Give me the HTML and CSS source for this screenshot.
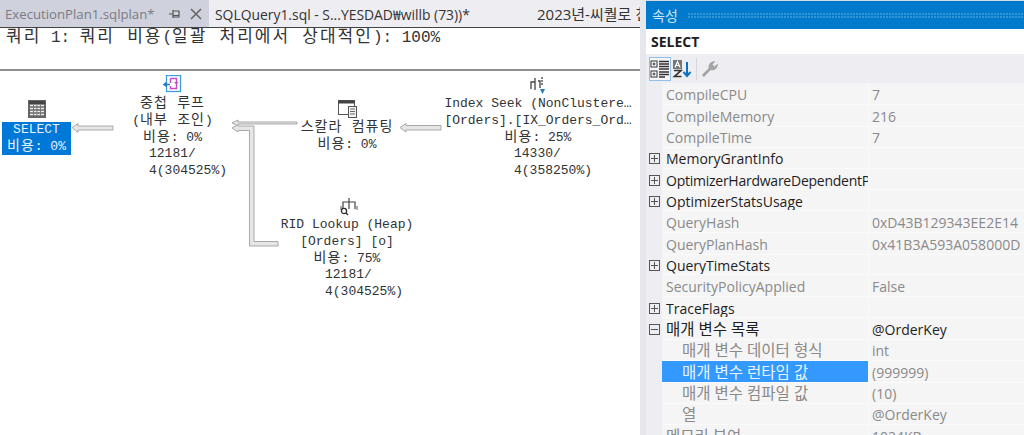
FILE: index.html
```html
<!DOCTYPE html>
<html lang="ko">
<head>
<meta charset="utf-8">
<title>속성</title>
<link rel="stylesheet" href="styles.css">
</head>
<body>
<div class="app">
  <section class="editor">
    <div class="tabs">
      <div class="tab tab-active">
        <span class="tab-name">ExecutionPlan1.sqlplan*</span>
        <svg class="pin" width="14" height="12" viewBox="0 0 14 12"><path d="M1 6H5M5 2V10M5 3H11V9H5M5 7.5H11" fill="none" stroke="#555" stroke-width="1.2"/></svg>
        <svg class="close" width="12" height="12" viewBox="0 0 12 12"><path d="M1 1L11 11M11 1L1 11" stroke="#666" stroke-width="1.6"/></svg>
      </div>
      <div class="tab tab-second">SQLQuery1.sql - S...YESDAD₩willb (73))*</div>
      <div class="tab tab-third">2023년-씨퀄로 친</div>
    </div>
    <div class="query-head"><span class="ko">쿼리</span> 1: <span class="ko">쿼리 비용</span>(<span class="ko">일괄 처리에서 상대적인</span>): 100%</div>
    <div class="plan">
      <svg class="links" width="640" height="364" viewBox="0 0 640 364">
        <path class="link" d="M72 56.500L78 52.500V55H113V59H78V61.500Z"/>
        <path class="link" d="M232 52L238 49V51H297V53H238V55Z"/>
        <path class="link" d="M232 57L238 53.500V55H254V170.500H278V175H249.500V59.500H238V61Z"/>
        <path class="link" d="M400 56.500L406 52.500V54.500H441V59H406V61Z"/>
      </svg>

      <svg class="icon icon-select" width="20" height="20" viewBox="0 0 20 20">
        <rect x="1" y="1" width="18" height="18" fill="#666"/>
        <rect x="2" y="2" width="16" height="3" fill="#444"/>
        <path d="M3 6.500H17M3 9.500H17M3 12.500H17M3 15.500H17" stroke="#eee" stroke-width="1.500"/>
        <path d="M6.500 6V17M10 6V17M13.500 6V17" stroke="#777"/>
      </svg>
      <svg class="icon icon-loop" width="19" height="19" viewBox="0 0 19 19">
        <rect x="3.500" y="0.500" width="14" height="16" fill="#fff" stroke="#3f9be0" stroke-width="1.300"/>
        <path d="M7.500 3.500H13.500V13.500H7.500V11M7.500 3.500V8" fill="none" stroke="#c050c0" stroke-width="1.500"/>
        <path d="M11 7H15.500L13.300 9.500Z" fill="#c050c0"/>
        <path d="M1 9.500H7M3.500 7.500L1 9.500L3.500 11.500" fill="none" stroke="#1f7ac4" stroke-width="1.500"/>
      </svg>
      <svg class="icon icon-scalar" width="20" height="20" viewBox="0 0 20 20">
        <rect x="0.500" y="1.500" width="16" height="14" fill="#fff" stroke="#555"/>
        <rect x="0.500" y="1.500" width="16" height="3" fill="#444"/>
        <rect x="10.500" y="7.500" width="8" height="11" fill="#f4f4f4" stroke="#555"/>
        <path d="M12 10H17M12 12.500H17M12 15H17" stroke="#666"/>
      </svg>
      <svg class="icon icon-seek" width="16" height="20" viewBox="0 0 16 20">
        <path d="M1 13V6H5M5 2V14M8 5H10V12" fill="none" stroke="#444" stroke-width="1.300"/>
        <path d="M12 1V9" stroke="#444" stroke-width="1.300" stroke-dasharray="2 1"/>
        <path d="M10 13H15L12.500 18Z" fill="#1f7ac4"/>
      </svg>
      <svg class="icon icon-rid" width="20" height="20" viewBox="0 0 20 20">
        <path d="M10 1V12M4 12V5H16V12" fill="none" stroke="#444" stroke-width="1.200"/>
        <path d="M2 9V13M18 9V13" stroke="#777" stroke-width="1.200"/>
        <circle cx="5" cy="14" r="2.600" fill="#fff" stroke="#333" stroke-width="1.300"/>
        <path d="M7 16L9 18" stroke="#333" stroke-width="1.500"/>
      </svg>

      <div class="node node-select selected">SELECT<br><span class="ko">비용</span>: 0%</div>
      <div class="node node-loop"><span class="ko">중첩 루프</span><br>(<span class="ko">내부 조인</span>)<br><span class="ko">비용</span>: 0%<br><span class="count">12181/<br>4(304525%)</span></div>
      <div class="node node-scalar"><span class="ko">스칼라 컴퓨팅</span><br><span class="ko">비용</span>: 0%</div>
      <div class="node node-seek">Index Seek (NonClustere…<br>[Orders].[IX_Orders_Ord…<br><span class="ko">비용</span>: 25%<br><span class="count">14330/<br>4(358250%)</span></div>
      <div class="node node-rid">RID Lookup (Heap)<br>[Orders] [o]<br><span class="ko">비용</span>: 75%<br><span class="count">12181/<br>4(304525%)</span></div>
    </div>
  </section>

  <aside class="props">
    <header class="props-title"><span class="props-title-text">속성</span><span class="grip"></span></header>
    <div class="props-object">SELECT</div>
    <div class="toolbar">
      <button class="tool tool-on" type="button" aria-label="범주별">
        <svg width="20" height="20" viewBox="0 0 20 20">
          <rect x="1" y="2" width="6" height="6" fill="#fff" stroke="#333"/><path d="M2.500 5H5.500M4 3.500V6.500" stroke="#333"/>
          <rect x="1" y="12" width="6" height="6" fill="#fff" stroke="#333"/><path d="M2.500 15H5.500M4 13.500V16.500" stroke="#333"/>
          <path d="M9 2.500H19M9 5H19M9 7.500H19M9 10H19M9 13H19M9 15.500H19M9 18H15" stroke="#333" stroke-width="1.300"/>
        </svg>
      </button>
      <button class="tool" type="button" aria-label="사전순">
        <svg width="20" height="20" viewBox="0 0 20 20">
          <rect x="1" y="1" width="9" height="9" fill="#777"/>
          <path d="M3 8.500L5.500 2.500L8 8.500M4 6.500H7" fill="none" stroke="#fff" stroke-width="1.200"/>
          <path d="M2 11.500H9L2.500 17.500H9.500" fill="none" stroke="#333" stroke-width="1.700"/>
          <path d="M15 3V17M11.500 13L15 17L18.500 13" fill="none" stroke="#0e70c0" stroke-width="2"/>
        </svg>
      </button>
      <span class="tool-sep"></span>
      <button class="tool tool-wrench" type="button" aria-label="속성 페이지">
        <svg width="20" height="20" viewBox="0 0 20 20">
          <path d="M1 16.800L8.500 9.300C7.500 4.500 11.500 0.500 16 1.500L12.800 5L15 7.200L18.500 3.800C19.500 8.500 15 12.500 10.800 11L3.300 19Z" fill="#a4a4a4"/>
        </svg>
      </button>
    </div>
    <div class="grid">
      <div class="row"><span class="gut"></span><span class="key dim">CompileCPU</span><span class="val dim">7</span></div>
      <div class="row"><span class="gut"></span><span class="key dim">CompileMemory</span><span class="val dim">216</span></div>
      <div class="row"><span class="gut"></span><span class="key dim">CompileTime</span><span class="val dim">7</span></div>
      <div class="row"><span class="gut"><i class="exp plus"></i></span><span class="key">MemoryGrantInfo</span><span class="val"></span></div>
      <div class="row"><span class="gut"><i class="exp plus"></i></span><span class="key tight">OptimizerHardwareDependentProperties</span><span class="val"></span></div>
      <div class="row"><span class="gut"><i class="exp plus"></i></span><span class="key">OptimizerStatsUsage</span><span class="val"></span></div>
      <div class="row"><span class="gut"></span><span class="key dim">QueryHash</span><span class="val dim">0xD43B129343EE2E14</span></div>
      <div class="row"><span class="gut"></span><span class="key dim">QueryPlanHash</span><span class="val dim">0x41B3A593A058000D</span></div>
      <div class="row"><span class="gut"><i class="exp plus"></i></span><span class="key">QueryTimeStats</span><span class="val"></span></div>
      <div class="row"><span class="gut"></span><span class="key dim">SecurityPolicyApplied</span><span class="val dim">False</span></div>
      <div class="row"><span class="gut"><i class="exp plus"></i></span><span class="key">TraceFlags</span><span class="val"></span></div>
      <div class="row"><span class="gut"><i class="exp"></i></span><span class="key hangul">매개 변수 목록</span><span class="val">@OrderKey</span></div>
      <div class="row"><span class="gut"></span><span class="key hangul sub dim">매개 변수 데이터 형식</span><span class="val dim">int</span></div>
      <div class="row"><span class="gut"></span><span class="key hangul sub picked">매개 변수 런타임 값</span><span class="val dim">(999999)</span></div>
      <div class="row"><span class="gut"></span><span class="key hangul sub dim">매개 변수 컴파일 값</span><span class="val dim">(10)</span></div>
      <div class="row"><span class="gut"></span><span class="key hangul sub dim">열</span><span class="val dim">@OrderKey</span></div>
      <div class="row"><span class="gut"></span><span class="key hangul dim">메모리 부여</span><span class="val dim">1024KB</span></div>
    </div>
  </aside>
</div>
</body>
</html>
```

FILE: styles.css
```css
* { box-sizing: border-box; }
html, body { margin: 0; height: 435px; overflow: hidden; background: #fff; }
body { font-family: "Open Sans", "Noto Sans CJK KR", sans-serif; }
.app { display: flex; height: 435px; }

.editor { width: 640px; flex: none; display: flex; flex-direction: column; overflow: hidden; }
.tabs { height: 28px; flex: none; display: flex; background: #eeeef2; border-bottom: 1px solid #444; font-size: 14px; color: #333; white-space: nowrap; overflow: hidden; }
.tab { display: flex; flex: none; align-items: center; height: 27px; }
.tab-active { width: 209px; background: #cfd1dc; padding-left: 5px; color: #7b7b86; font-size: 13.2px; }
.tab-name { width: 163px; }
.pin { margin-right: 8px; }
.tab-second { width: 328px; padding-left: 6px; font-size: 13.9px; }
.tab-third { font-size: 15px; }

.query-head { height: 43px; flex: none; padding: 1px 0 0 6px; border-bottom: 2px solid #8e8e8e; font: 16px/17px "Liberation Mono", "Noto Sans CJK KR", monospace; color: #333; white-space: pre; }
.query-head .ko { font-size: 17px; letter-spacing: 2px; }

.plan { position: relative; flex: 1; background: #fff; }
.links { position: absolute; left: 0; top: 0; }
.link { fill: #e6e6e6; stroke: #a9a9a9; stroke-width: 1; }
.icon { position: absolute; }
.icon-select { left: 27px; top: 28px; }
.icon-loop { left: 163px; top: 4px; }
.icon-scalar { left: 338px; top: 28px; }
.icon-seek { left: 530px; top: 5px; }
.icon-rid { left: 339px; top: 126px; }

.node { position: absolute; font: 13px/16.8px "Liberation Mono", "Noto Sans CJK KR", monospace; color: #333; text-align: center; white-space: nowrap; }
.node .ko { font-size: 14px; letter-spacing: 1px; line-height: 1; }
.count { display: inline-block; text-align: left; }
.selected { background: #0078d7; color: #e8f2fb; }
.node-select { left: 2px; top: 51px; width: 69px; height: 33px; }
.node-loop { left: 120px; top: 25px; width: 105px; }
.node-scalar { left: 297px; top: 49px; width: 100px; }
.node-seek { left: 444px; top: 25px; width: 188px; }
.node-rid { left: 272px; top: 146px; width: 150px; }
.node-loop .count { margin-left: 29px; }
.node-seek .count { margin-left: 30px; }
.node-rid .count { margin-left: 34px; }

.props { flex: 1; min-width: 0; display: flex; flex-direction: column; border-left: 6px solid #e6e7ed; }
.props-title { height: 29px; flex: none; display: flex; align-items: center; background: #007acc; border-top: 1px solid #d8d8e0; color: #cde6f7; font-size: 14px; padding-left: 6px; }
.props-title-text { width: 36px; flex: none; }
.grip { flex: 1; height: 5px; background-image: radial-gradient(circle at 1px 1px, #3394d6 1px, transparent 1.200px); background-size: 3px 3px; }
.props-object { height: 25px; flex: none; background: #fff; font-size: 14px; font-weight: 700; color: #1e1e1e; padding-left: 5px; line-height: 25px; }
.toolbar { height: 29.3px; flex: none; display: flex; align-items: center; background: #eeeef2; padding-left: 3px; }
.tool { width: 22px; height: 24px; padding: 0; border: 1px solid transparent; background: none; display: flex; align-items: center; justify-content: center; }
.tool-on { border-color: #8fc0ea; background: #f6f6f8; }
.tool-sep { width: 1px; height: 22px; background: #d6d6dc; margin: 0 3px 0 3px; }
.tool-wrench { width: 20px; }

.grid { flex: 1; display: grid; grid-auto-rows: 21.33px; align-content: start; background: #f5f5f5; overflow: hidden; font-size: 14px; color: #1e1e1e; }
.row { display: grid; grid-template-columns: 16px 206px 1fr; align-items: stretch; white-space: nowrap; }
.gut { background: #eeeef2; position: relative; }
.key { overflow: hidden; padding: 2px 0 0 4px; line-height: 19px; border-bottom: 1px solid #fafafa; }
.val { padding: 2px 0 0 3px; line-height: 19px; border-left: 1px solid #fafafa; border-bottom: 1px solid #fafafa; }
.tight { letter-spacing: -0.25px; }
.hangul { font-size: 15.5px; }
.sub { padding-left: 20px; }
.dim { color: #8a8a8a; }
.picked { background: #3399ff; color: #e8f4ff; }
.exp { position: absolute; left: 2.500px; top: 6px; width: 11px; height: 11px; border: 1px solid #555; }
.exp::before { content: ""; position: absolute; left: 1px; right: 1px; top: 4px; height: 1px; background: #555; }
.plus::after { content: ""; position: absolute; top: 1px; bottom: 1px; left: 4px; width: 1px; background: #555; }
```
